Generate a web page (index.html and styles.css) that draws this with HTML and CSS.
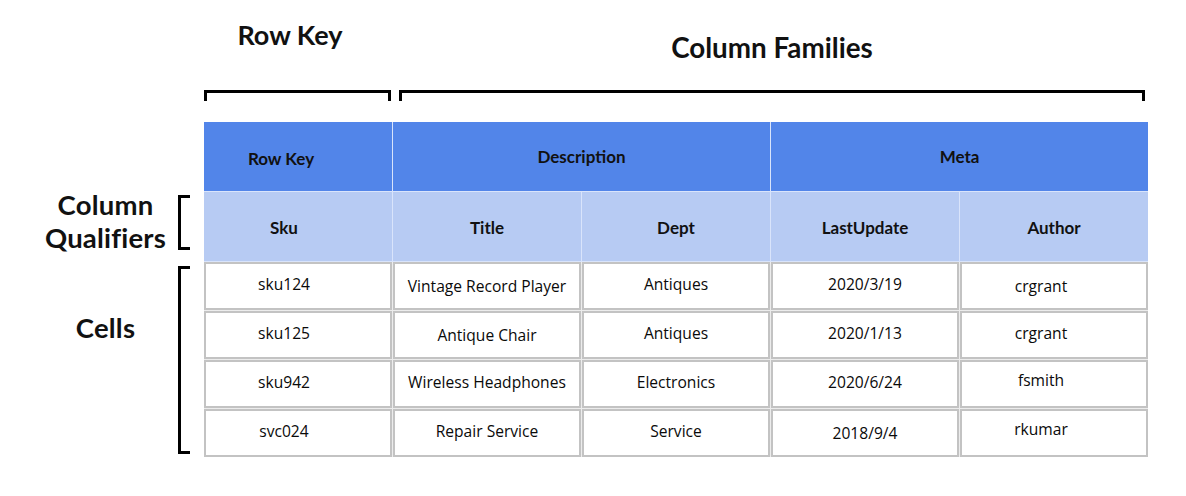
FILE: index.html
```html
<!DOCTYPE html>
<html lang="en">
<head>
<meta charset="utf-8">
<title>Bigtable data model</title>
<link rel="stylesheet" href="styles.css">
</head>
<body>
<div class="page">
  <div class="side">
    <div class="side-block qual">
      <div class="label">Column<br>Qualifiers</div>
      <div class="brace-left brace-qual"></div>
    </div>
    <div class="side-block cells">
      <div class="label label-cells">Cells</div>
      <div class="brace-left brace-cells"></div>
    </div>
  </div>
  <div class="main">
    <div class="tops">
      <div class="group group-rk">
        <h2 class="heading heading-rk">Row Key</h2>
        <div class="brace-top"></div>
      </div>
      <div class="group group-cf">
        <h2 class="heading heading-cf">Column Families</h2>
        <div class="brace-top"></div>
      </div>
    </div>
    <div class="head">
      <div class="hcell fam first">Row Key</div>
      <div class="hcell fam span2">Description</div>
      <div class="hcell fam span2">Meta</div>
      <div class="hcell qual-cell first">Sku</div>
      <div class="hcell qual-cell">Title</div>
      <div class="hcell qual-cell">Dept</div>
      <div class="hcell qual-cell">LastUpdate</div>
      <div class="hcell qual-cell">Author</div>
    </div>
    <div class="data">
      <div class="cell first">sku124</div>
      <div class="cell low">Vintage Record Player</div>
      <div class="cell">Antiques</div>
      <div class="cell">2020/3/19</div>
      <div class="cell low auth">crgrant</div>

      <div class="cell first">sku125</div>
      <div class="cell low">Antique Chair</div>
      <div class="cell">Antiques</div>
      <div class="cell">2020/1/13</div>
      <div class="cell auth">crgrant</div>

      <div class="cell first">sku942</div>
      <div class="cell">Wireless Headphones</div>
      <div class="cell">Electronics</div>
      <div class="cell">2020/6/24</div>
      <div class="cell high auth">fsmith</div>

      <div class="cell first">svc024</div>
      <div class="cell">Repair Service</div>
      <div class="cell">Service</div>
      <div class="cell low">2018/9/4</div>
      <div class="cell high auth">rkumar</div>
    </div>
  </div>
</div>
</body>
</html>
```

FILE: styles.css
```css
* { box-sizing: border-box; }
html, body { margin: 0; padding: 0; background: #fff; }
body {
  color: #111;
  font-family: "Lato", "Liberation Sans", sans-serif;
}
.page {
  display: flex;
  width: 1186px;
  height: 496px;
}
.side {
  width: 204px;
  padding-top: 192px;
  display: flex;
  flex-direction: column;
}
.side-block {
  display: flex;
  padding-left: 33px;
}
.qual { height: 70px; }
.cells { height: 200px; }
.label {
  width: 145px;
  text-align: center;
  font-weight: 700;
  font-size: 27.5px;
  line-height: 33px;
  letter-spacing: 0.2px;
}
.qual .label { margin-top: -4px; }
.label-cells { margin-top: 49px; }
.brace-left {
  width: 12px;
  border: 3px solid #000;
  border-right: none;
}
.brace-qual { margin-top: 3px; height: 55px; }
.brace-cells { margin-top: 4px; height: 188px; }

.main { display: flex; flex-direction: column; }
.tops {
  display: flex;
  height: 122px;
}
.group {
  display: flex;
  flex-direction: column;
  align-items: center;
}
.group-rk { width: 188px; }
.group-cf { width: 746px; margin-left: 7px; }
.heading {
  margin: 0;
  font-size: 27px;
  font-weight: 700;
  line-height: 32px;
  height: 32px;
}
.heading-rk { margin-top: 19px; margin-right: 16px; margin-bottom: 39px; }
.heading-cf { margin-top: 32px; margin-bottom: 26px; font-size: 27.8px; }
.brace-top {
  align-self: stretch;
  height: 11px;
  border: 3px solid #000;
  border-bottom: none;
}
.group-rk .brace-top { margin-right: 1px; }

.head {
  display: grid;
  grid-template-columns: repeat(5, 188px);
  grid-template-rows: 69px 69px;
  gap: 1px;
  background: #d9e4fb;
  padding-bottom: 1px;
}
.hcell {
  display: flex;
  align-items: center;
  justify-content: center;
  font-weight: 700;
  font-size: 17px;
}
.fam { background: #5285e9; }
.span2 { grid-column: span 2; }
.qual-cell { background: #b7cbf3; padding-top: 2px; }
.first { padding-right: 28px; }
.hcell.fam.first { padding-top: 3px; padding-right: 34px; }

.data {
  display: grid;
  grid-template-columns: repeat(5, 188px);
  grid-auto-rows: 48px;
  gap: 1px;
  background: #ececec;
  width: 944px;
}
.cell {
  display: flex;
  align-items: center;
  justify-content: center;
  background: #fff;
  border: 2px solid #c3c3c3;
  font-family: "Open Sans", "Noto Sans", sans-serif;
  font-size: 15.6px;
  color: #0a0a0a;
  padding-bottom: 4px;
}
.cell.low { padding-bottom: 0; }
.cell.high { padding-bottom: 8px; }
.cell.auth { padding-right: 26px; }
```
